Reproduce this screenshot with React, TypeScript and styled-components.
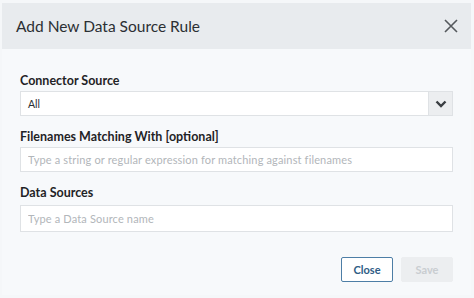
import React from 'react';
import styled, { createGlobalStyle } from 'styled-components';

const GlobalStyle = createGlobalStyle`
  * { box-sizing: border-box; }
  body {
    margin: 0;
    background: #f5f7f9;
    font-family: Lato, "Open Sans", "Liberation Sans", sans-serif;
  }
`;

const Page = styled.div`
  width: 474px;
  height: 298px;
  padding: 3px 3px 3px 2px;
`;

const Dialog = styled.div`
  display: flex;
  flex-direction: column;
  width: 469px;
  height: 292px;
  background: #f7f9fb;
`;

const Header = styled.div`
  display: flex;
  align-items: center;
  justify-content: space-between;
  height: 46px;
  padding: 0 13px 0 14px;
  background: #e8ebee;
`;

const Title = styled.h2`
  margin: 0;
  font-size: 15.5px;
  font-weight: 400;
  color: #2b2f33;
`;

const CloseIcon = styled.button`
  display: flex;
  padding: 0;
  border: 0;
  background: none;
  color: #55595d;
`;

const Body = styled.div`
  display: flex;
  flex-direction: column;
  gap: 13px;
  padding: 24px 18px 0 18px;
`;

const Field = styled.div<{ loose?: boolean }>`
  display: flex;
  flex-direction: column;
  gap: ${p => (p.loose ? 4 : 2)}px;
`;

const Label = styled.label`
  font-size: 12.5px;
  font-weight: 700;
  color: #1f2326;
  line-height: 16px;
`;

const SelectBox = styled.div`
  display: flex;
  height: 25px;
  border: 1px solid #dfe2e5;
  background: #fff;
`;

const SelectValue = styled.div`
  flex: 1;
  display: flex;
  align-items: center;
  padding-left: 7px;
  font-size: 10.5px;
  color: #2b2f33;
`;

const Chevron = styled.div`
  display: flex;
  align-items: center;
  justify-content: center;
  width: 24px;
  background: #eceef0;
  border-left: 1px solid #dfe2e5;
  color: #3a3e42;
`;

const Input = styled.input<{ tall?: boolean }>`
  height: ${p => (p.tall ? 27 : 25)}px;
  padding: 0 7px;
  border: 1px solid #dfe2e5;
  background: #fff;
  font-family: inherit;
  font-size: 11px;
  letter-spacing: 0.15px;
  outline: none;
  &::placeholder { color: #b2b6ba; }
`;

const Footer = styled.div`
  display: flex;
  justify-content: flex-end;
  gap: 8px;
  padding: 25px 18px 0 0;
`;

const Button = styled.button<{ primary?: boolean }>`
  width: 52px;
  height: 25px;
  font-family: inherit;
  font-size: 11px;
  font-weight: 700;
  border: 1px solid ${p => (p.primary ? '#4d7ea6' : '#eceef0')};
  background: ${p => (p.primary ? '#fff' : '#eceef0')};
  color: ${p => (p.primary ? '#2f5d85' : '#c9cdd1')};
  border-radius: 2px;
`;

export default function App() {
  return (
    <>
      <GlobalStyle />
      <Page>
        <Dialog>
          <Header>
            <Title>Add New Data Source Rule</Title>
            <CloseIcon>
              <svg width="14" height="14" viewBox="0 0 14 14">
                <path d="M1 1L13 13M13 1L1 13" stroke="currentColor" strokeWidth="1.6" />
              </svg>
            </CloseIcon>
          </Header>
          <Body>
            <Field>
              <Label>Connector Source</Label>
              <SelectBox>
                <SelectValue>All</SelectValue>
                <Chevron>
                  <svg width="12" height="8" viewBox="0 0 12 8">
                    <path d="M1.5 1.5L6 6L10.5 1.5" fill="none" stroke="currentColor" strokeWidth="2.4" />
                  </svg>
                </Chevron>
              </SelectBox>
            </Field>
            <Field>
              <Label>Filenames Matching With [optional]</Label>
              <Input placeholder="Type a string or regular expression for matching against filenames" />
            </Field>
            <Field loose>
              <Label>Data Sources</Label>
              <Input tall placeholder="Type a Data Source name" />
            </Field>
          </Body>
          <Footer>
            <Button primary>Close</Button>
            <Button>Save</Button>
          </Footer>
        </Dialog>
      </Page>
    </>
  );
}
